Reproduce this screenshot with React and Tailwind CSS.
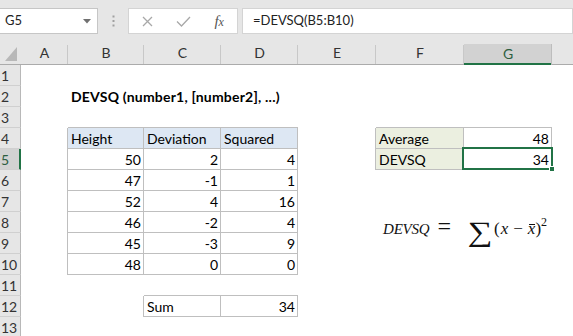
import React from "react";

const COLW = ["w-[47px]", "w-[76px]", "w-[77px]", "w-[77px]", "w-[78px]", "w-[88px]", "w-[88px]", "w-[80px]"];
const LETTERS = ["A", "B", "C", "D", "E", "F", "G", "H"];

function cx(...a) {
  return a.filter(Boolean).join(" ");
}

function Cell({ col, spec = {} }) {
  const { r, b, bg, right, bold, t } = spec;
  return (
    <div
      className={cx(
        "shrink-0 h-full flex items-center whitespace-nowrap border-[#bfbfbf]",
        COLW[col],
        r && "border-r",
        b && "border-b",
        bg,
        right ? "justify-end pr-[2px]" : "pl-[3px]",
        bold && "font-bold tracking-[0.2px]"
      )}
    >
      {t}
    </div>
  );
}

const heights = [50, 47, 52, 46, 45, 48];
const devs = ["2", "-1", "4", "-2", "-3", "0"];
const sqs = [4, 1, 16, 4, 9, 0];

function buildRows() {
  const rows = [];
  for (let i = 1; i <= 13; i++) rows.push({});
  const R = (n) => rows[n - 1];
  R(2).B = { t: "DEVSQ (number1, [number2], ...)", bold: true };
  ["B", "C", "D"].forEach((c) => (R(3)[c] = { b: true }));
  ["F", "G"].forEach((c) => (R(3)[c] = { b: true }));
  R(4).A = { r: true };
  R(4).B = { r: true, b: true, bg: "bg-[#dde7f3]", t: "Height" };
  R(4).C = { r: true, b: true, bg: "bg-[#dde7f3]", t: "Deviation" };
  R(4).D = { r: true, b: true, bg: "bg-[#dde7f3]", t: "Squared" };
  R(4).E = { r: true };
  R(4).F = { r: true, b: true, bg: "bg-[#ebefe0]", t: "Average" };
  R(4).G = { r: true, b: true, right: true, t: "48" };
  R(5).E = { r: true };
  R(5).F = { r: true, b: true, bg: "bg-[#ebefe0]", t: "DEVSQ" };
  R(5).G = { r: true, b: true, right: true, t: "34" };
  for (let k = 0; k < 6; k++) {
    const row = R(5 + k);
    row.A = { r: true };
    row.B = { r: true, b: true, right: true, t: String(heights[k]) };
    row.C = { r: true, b: true, right: true, t: devs[k] };
    row.D = { r: true, b: true, right: true, t: String(sqs[k]) };
  }
  R(11).C = { b: true };
  R(11).D = { b: true };
  R(12).B = { r: true };
  R(12).C = { r: true, b: true, t: "Sum" };
  R(12).D = { r: true, b: true, right: true, t: "34" };
  return rows;
}

function TopBar() {
  return (
    <div className="h-[40px] bg-[#e6e6e6] flex items-start pt-[8px] text-[13px] text-[#222]">
      <div className="w-[99px] h-[26px] -ml-px bg-white border border-[#c6c6c6] flex items-center justify-between pl-[5px] pr-[6px]">
        <span>G5</span>
        <svg width="8" height="5" viewBox="0 0 8 5">
          <path d="M0 0 L8 0 L4 4.5 Z" fill="#707070" />
        </svg>
      </div>
      <div className="w-[30px] h-[26px] flex items-center justify-center">
        <svg width="3" height="12" viewBox="0 0 3 12">
          <rect x="0.5" y="0.5" width="2" height="2" fill="#a0a0a0" />
          <rect x="0.5" y="5" width="2" height="2" fill="#a0a0a0" />
          <rect x="0.5" y="9.5" width="2" height="2" fill="#a0a0a0" />
        </svg>
      </div>
      <div className="w-[110px] h-[26px] bg-white border border-[#d4d4d4] flex items-center pl-px">
        <div className="w-[36px] flex justify-center">
          <svg width="11" height="11" viewBox="0 0 11 11">
            <path d="M1 1 L10 10 M10 1 L1 10" stroke="#a8a8a8" strokeWidth="1.3" />
          </svg>
        </div>
        <div className="w-[36px] flex justify-center">
          <svg width="15" height="11" viewBox="0 0 15 11">
            <path d="M1 5.5 L5.5 10 L14 1" stroke="#a8a8a8" strokeWidth="1.3" fill="none" />
          </svg>
        </div>
        <div className="w-[36px] flex justify-center">
          <span className="italic text-[15px] text-[#555] [font-family:'Liberation_Serif',serif]">
            f<span className="text-[12px]">x</span>
          </span>
        </div>
      </div>
      <div className="ml-[4px] flex-1 h-[26px] bg-white border border-[#d4d4d4] flex items-center pl-[10px]">
        =DEVSQ(B5:B10)
      </div>
    </div>
  );
}

function HeaderRow() {
  return (
    <div className="flex h-[25px] bg-[#e6e6e6] text-[#333]">
      <div className="w-[21px] shrink-0 h-full border-b border-[#ababab] relative">
        <svg className="absolute left-0 top-0" width="21" height="24" viewBox="0 0 21 24">
          <path d="M17 7 L17 21 L5 21 Z" fill="#b8b8b8" />
        </svg>
      </div>
      {LETTERS.map((L, i) =>
        L === "G" ? (
          <div key={L} className={cx("shrink-0 h-full pt-[4px] flex relative", COLW[i])}>
            <div className="flex-1 flex items-center justify-center bg-[#d2d2d2] border-b-2 border-[#217346] text-[#2d5e40]">
              {L}
            </div>
            <div className="absolute right-0 top-[4px] bottom-0 w-px bg-[#bdbdbd]" />
          </div>
        ) : (
          <div
            key={L}
            className={cx("shrink-0 h-full flex items-center justify-center border-b border-[#ababab] relative", COLW[i])}
          >
            {L === "H" ? null : L}
            <div className="absolute right-0 top-[5px] bottom-0 w-px bg-[#c8c8c8]" />
          </div>
        )
      )}
    </div>
  );
}

export default function App() {
  const rows = buildRows();
  return (
    <div className="w-[573px] h-[336px] overflow-hidden bg-white relative text-[14px] text-black [font-family:Lato,'Liberation_Sans',sans-serif]">
      <TopBar />
      <HeaderRow />
      {rows.map((row, idx) => {
        const n = idx + 1;
        const sel = n === 5;
        return (
          <div key={n} className="flex h-[21px]">
            <div
              className={cx(
                "w-[21px] shrink-0 h-full flex items-center pl-px border-b border-[#d0d0d0]",
                sel ? "bg-[#d2d2d2] border-r-2 border-r-[#217346] text-[#2d5e40]" : "bg-[#e6e6e6] border-r border-r-[#b8b8b8] text-[#333]"
              )}
            >
              {n}
            </div>
            {LETTERS.map((L, i) => (
              <Cell key={L} col={i} spec={row[L]} />
            ))}
          </div>
        );
      })}
      {/* active cell selection */}
      <div className="absolute left-[462px] top-[147px] w-[91px] h-[23px] border-2 border-[#217346]" />
      <div className="absolute left-[549px] top-[166px] w-[6px] h-[6px] bg-[#217346] border border-white" />
      {/* equation object */}
      <div className="absolute left-[383px] top-[217px] leading-[24px] text-[17px] text-[#111] [font-family:'Liberation_Serif',serif] whitespace-nowrap">
        <span className="italic text-[15px] tracking-[-0.2px]">DEVSQ</span>
        <span className="inline-block ml-[8px] mr-[19px] text-[24px] leading-[0]">=</span>
        <span className="inline-block text-[28px] leading-[0] relative top-[7px] scale-x-125">∑</span>
        <span className="ml-[4px]">(</span>
        <span className="italic ml-[1px]">x</span>
        <span className="mx-[5px]">−</span>
        <span className="italic relative inline-block">
          x
          <span className="absolute left-[1px] right-0 top-[7px] h-px bg-[#111]" />
        </span>
        <span>)</span>
        <span className="text-[12px] relative -top-[8px]">2</span>
      </div>
    </div>
  );
}
